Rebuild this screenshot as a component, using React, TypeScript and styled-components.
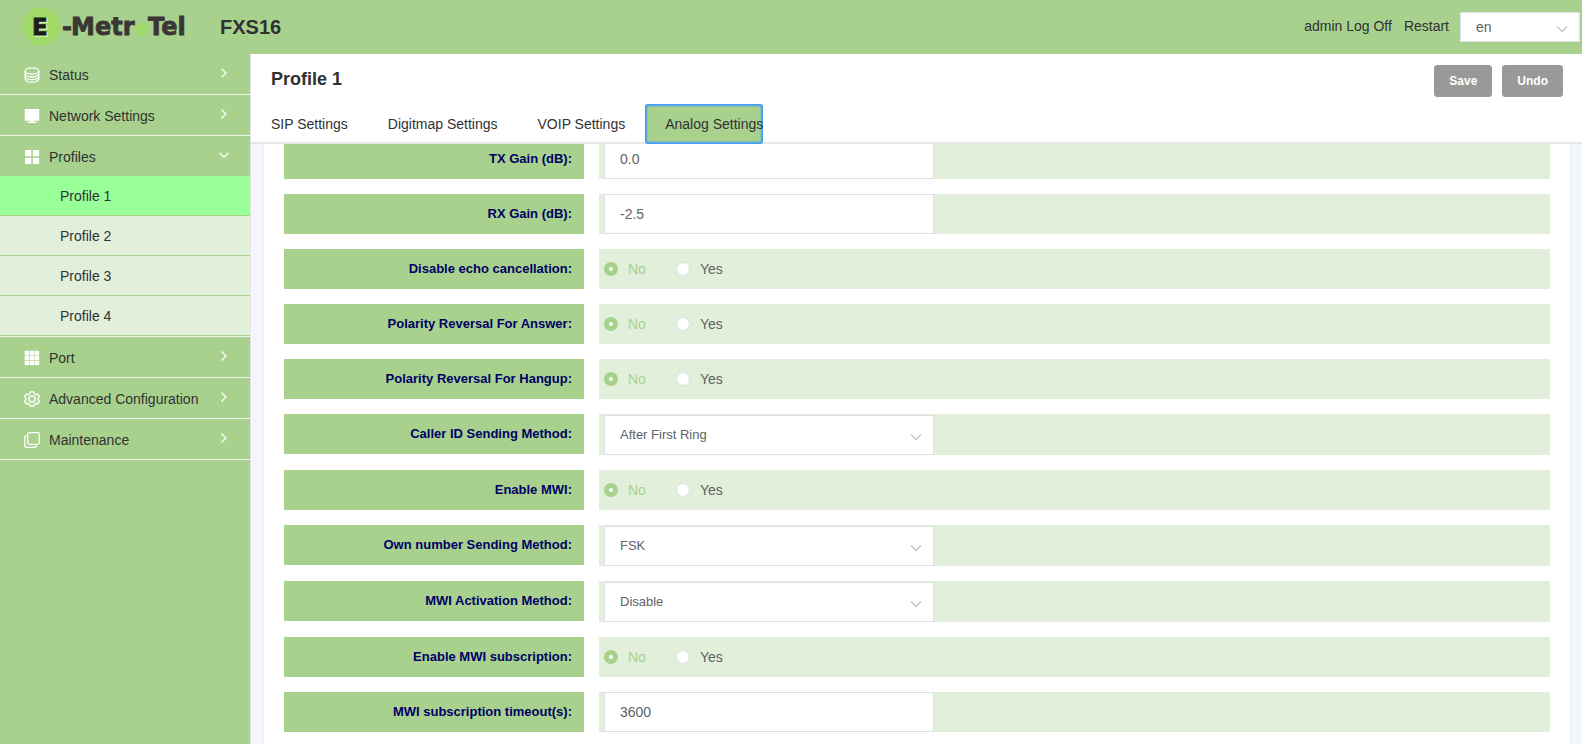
import React, { useState } from "react";
import styled, { createGlobalStyle, css } from "styled-components";

const green = "#a8d18d";
const paleGreen = "#e2efda";
const textDark = "#303133";
const textGrey = "#606266";
const borderGrey = "#dcdfe6";

const GlobalStyle = createGlobalStyle`
  *, *::before, *::after { box-sizing: border-box; }
  body {
    margin: 0;
    font-family: "Liberation Sans", Arial, Helvetica, sans-serif;
    font-size: 14px;
    color: ${textDark};
  }
  button, input, select { font: inherit; }
`;

const Page = styled.div`
  display: flex;
  flex-direction: column;
  height: 100vh;
  overflow: hidden;
`;

const Header = styled.header`
  display: flex;
  align-items: center;
  flex: none;
  height: 54px;
  padding: 0 2px 0 22px;
  background: ${green};
`;

const LogoSvg = styled.svg`
  display: block;
  flex: none;
`;

const Model = styled.h1`
  margin: 0 auto 0 27px;
  font-size: 20px;
  line-height: 54px;
  font-weight: bold;
`;

const HeaderLinks = styled.nav`
  display: flex;
  gap: 12px;
  margin-right: 11px;
  padding-bottom: 2px;
`;

const HeaderLink = styled.a`
  color: ${textDark};
  text-decoration: none;
`;

const Body = styled.div`
  display: flex;
  flex: 1;
  min-height: 0;
`;

const Sidebar = styled.nav`
  flex: none;
  width: 251px;
  background: ${green};
  border-right: 1px solid #e6e6e6;
`;

const MenuList = styled.ul`
  list-style: none;
  margin: 0;
  padding: 0;
`;

const MenuItem = styled.li`
  border-bottom: 1px solid #f0f5ec;
`;

const MenuButton = styled.button`
  display: flex;
  align-items: center;
  width: 100%;
  height: 40px;
  padding: 2px 20px 0 24px;
  border: 0;
  background: none;
  color: ${textDark};
  text-align: left;
  cursor: pointer;

  span {
    flex: 1;
    padding-left: 9px;
  }
`;

const MenuArrow = styled.svg`
  flex: none;
  margin-bottom: 4px;
`;

const SubLink = styled.a<{ $active: boolean }>`
  display: block;
  height: 40px;
  padding-left: 60px;
  line-height: 40px;
  border-bottom: 1px solid ${green};
  background: ${(p) => (p.$active ? "#99ff99" : paleGreen)};
  color: ${textDark};
  text-decoration: none;
`;

const Main = styled.main`
  display: flex;
  flex: 1;
  flex-direction: column;
  min-width: 0;
`;

const TitleBar = styled.div`
  display: flex;
  align-items: center;
  flex: none;
  height: 50px;
  padding: 4px 19px 0 20px;
  background: #fff;
`;

const Title = styled.h2`
  flex: 1;
  margin: 0;
  padding-bottom: 4px;
  font-size: 18px;
  font-weight: bold;
`;

const ActionButton = styled.button`
  height: 32px;
  margin-left: 10px;
  padding: 0 14px;
  border: 1px solid #999;
  border-radius: 3px;
  background: #999;
  color: #fff;
  font-size: 12px;
  font-weight: bold;
  cursor: pointer;
`;

const TabBar = styled.div`
  display: flex;
  flex: none;
  height: 40px;
  background: linear-gradient(to top, #e4e7ed 2px, #fff 2px);
`;

const Tab = styled.button<{ $active: boolean }>`
  padding: 0 20px;
  border: 0;
  background: none;
  color: ${textDark};
  line-height: 40px;
  white-space: nowrap;
  cursor: pointer;

  &:last-child { padding-right: 0; }

  ${(p) =>
    p.$active &&
    css`
      background: ${green};
      border-radius: 3px;
      box-shadow: inset 0 0 2px 2px #409eff;
    `}
`;

const ScrollArea = styled.div`
  flex: 1;
  min-height: 0;
  padding: 0 11px 0 12px;
  overflow-y: auto;
  scrollbar-width: none;
  background: #f3f6fa;
`;

const Panel = styled.form`
  display: flex;
  flex-direction: column;
  gap: 15px;
  min-height: 100%;
  margin-top: -5px;
  padding: 0 20px 20px;
  border: solid #ebeef5;
  border-width: 0 1px;
  background: #fff;
`;

const Row = styled.div`
  display: flex;
  align-items: flex-start;
  gap: 15px;
`;

const labelStyle = css`
  flex: none;
  width: 300px;
  height: 40px;
  padding-right: 12px;
  background: ${green};
  color: #000066;
  font-size: 13px;
  font-weight: bold;
  line-height: 39px;
  text-align: right;
`;

const RowLabel = styled.label`
  ${labelStyle}
`;

const GroupLabel = styled.span`
  ${labelStyle}
`;

const Value = styled.div<{ $select?: boolean }>`
  flex: 1;
  min-width: 0;
  padding: ${(p) => (p.$select ? "1px" : "0")} 5px 0;
  background: ${paleGreen};
`;

const TextInput = styled.input`
  display: block;
  width: 330px;
  height: 40px;
  padding: 0 15px;
  border: 1px solid ${borderGrey};
  border-radius: 0;
  background: #fff;
  color: ${textGrey};
  outline: none;
`;

const SelectBox = styled.div<{ $compact?: boolean }>`
  position: relative;
  width: ${(p) => (p.$compact ? "120px" : "330px")};
  height: ${(p) => (p.$compact ? "30px" : "40px")};
  font-size: ${(p) => (p.$compact ? "14px" : "13px")};
`;

const NativeSelect = styled.select<{ $compact?: boolean }>`
  display: block;
  width: 100%;
  height: 100%;
  padding: 0 30px ${(p) => (p.$compact ? "0" : "2px")} 15px;
  border: 1px solid ${borderGrey};
  border-radius: 0;
  background: #fff;
  color: ${textGrey};
  appearance: none;
  outline: none;
`;

const SelectArrow = styled.svg`
  position: absolute;
  right: 12px;
  bottom: 0;
  top: 4px;
  margin: auto 0;
  pointer-events: none;
`;

const RadioGroup = styled.div`
  display: flex;
  gap: 30px;
  height: 40px;
`;

const RadioLabel = styled.label<{ $checked: boolean }>`
  display: flex;
  align-items: center;
  gap: 10px;
  color: ${(p) => (p.$checked ? green : textGrey)};
  cursor: pointer;
`;

const RadioInput = styled.input`
  appearance: none;
  width: 14px;
  height: 14px;
  margin: 0;
  border: 1px solid ${borderGrey};
  border-radius: 50%;
  background: #fff;

  &:checked {
    border: 5px solid ${green};
  }
`;

const Logo = () => (
  <LogoSvg width="171" height="54" viewBox="22 0 171 54" role="img" aria-label="E-MetroTel">
    <circle cx="41.5" cy="26.5" r="19" fill="#a0d966" />
    <g fontFamily="'DejaVu Sans', sans-serif" fontWeight="bold">
      <text x="33" y="35.5" fontSize="23" fill="#d5efb8" stroke="#d5efb8" strokeWidth="1.600">E</text>
      <text x="32" y="34.500" fontSize="23" fill="#1d1d1b" stroke="#1d1d1b" strokeWidth="0.8">E</text>
      <g fontSize="24" fill="#3a3634" stroke="#3a3634" strokeWidth="0.8">
        <text x="62" y="35">-</text>
        <text x="71" y="35">Metr</text>
        <text x="148" y="35">Tel</text>
      </g>
    </g>
    <circle cx="141.5" cy="29" r="6" fill="#a0d966" />
  </LogoSvg>
);

const icons: Record<string, React.ReactNode> = {
  coin: (
    <g fill="none" stroke="#fff" strokeWidth="1.3">
      <ellipse cx="8" cy="4" rx="6.8" ry="3.2" />
      <path d="M1.2 4v8c0 1.8 3 3.2 6.8 3.2s6.8-1.4 6.8-3.2V4" />
      <path d="M1.2 6.8C1.2 8.600 4.200 10 8 10s6.800-1.400 6.800-3.200" />
      <path d="M1.200 9.500c0 1.800 3 3.200 6.800 3.200s6.800-1.400 6.800-3.200" />
    </g>
  ),
  platform: (
    <g fill="#fff">
      <path d="M1.500 1h13a.8.8 0 0 1 .8.8V12a.8.8 0 0 1-.8.8h-13A.8.8 0 0 1 .7 12V1.800A.8.8 0 0 1 1.500 1z" />
      <path d="M6.500 12.500h3v1.200h3.200V15H3.300v-1.300h3.200z" />
    </g>
  ),
  menu: (
    <g fill="#fff">
      <rect x="1" y="1" width="6.300" height="6.300" rx=".4" />
      <rect x="8.800" y="1" width="6.300" height="6.300" rx=".4" />
      <rect x="1" y="8.800" width="6.300" height="6.300" rx=".4" />
      <rect x="8.800" y="8.800" width="6.300" height="6.300" rx=".4" />
    </g>
  ),
  grid: (
    <g fill="#fff">
      {[0.7, 5.7, 10.7].map((y) =>
        [0.7, 5.7, 10.7].map((x) => <rect key={`${x}-${y}`} x={x} y={y} width="4.500" height="4.500" />)
      )}
    </g>
  ),
  setting: (
    <g fill="none" stroke="#fff" strokeWidth="1.400" strokeLinejoin="round">
      <path d="M6.200.900h3.600l.6 1.900 1.500.9 2-.4 1.500 2.600-1.300 1.500v1.200l1.300 1.500-1.500 2.600-2-.4-1.500.9-.6 1.900H6.200l-.6-1.900-1.500-.9-2 .4L.600 10.100l1.300-1.500V7.400L.600 5.900l1.500-2.600 2 .4 1.500-.9z" />
      <circle cx="8" cy="8" r="3" />
    </g>
  ),
  copy: (
    <g fill="none" stroke="#fff" strokeWidth="1.300">
      <rect x="3.700" y=".700" width="11.600" height="11.600" rx="1.500" />
      <path d="M3.700 3.700H2.500A1.800 1.800 0 0 0 .7 5.500v8a1.800 1.800 0 0 0 1.800 1.800h8a1.800 1.800 0 0 0 1.800-1.800v-1.200" />
    </g>
  ),
};

const menu = [
  { icon: "coin", label: "Status" },
  { icon: "platform", label: "Network Settings" },
  { icon: "menu", label: "Profiles", children: ["Profile 1", "Profile 2", "Profile 3", "Profile 4"] },
  { icon: "grid", label: "Port" },
  { icon: "setting", label: "Advanced Configuration" },
  { icon: "copy", label: "Maintenance" },
];

const tabs = ["SIP Settings", "Digitmap Settings", "VOIP Settings", "Analog Settings"];

type Field = { id: string; label: string; kind: "text" | "radio" | "select"; value: string };

const fields: Field[] = [
  { id: "tx", label: "TX Gain (dB):", kind: "text", value: "0.0" },
  { id: "rx", label: "RX Gain (dB):", kind: "text", value: "-2.5" },
  { id: "echo", label: "Disable echo cancellation:", kind: "radio", value: "No" },
  { id: "answer", label: "Polarity Reversal For Answer:", kind: "radio", value: "No" },
  { id: "hangup", label: "Polarity Reversal For Hangup:", kind: "radio", value: "No" },
  { id: "callerId", label: "Caller ID Sending Method:", kind: "select", value: "After First Ring" },
  { id: "mwi", label: "Enable MWI:", kind: "radio", value: "No" },
  { id: "ownNumber", label: "Own number Sending Method:", kind: "select", value: "FSK" },
  { id: "mwiMethod", label: "MWI Activation Method:", kind: "select", value: "Disable" },
  { id: "mwiSub", label: "Enable MWI subscription:", kind: "radio", value: "No" },
  { id: "mwiTimeout", label: "MWI subscription timeout(s):", kind: "text", value: "3600" },
];

const Select = ({ id, value, label, compact }: { id: string; value: string; label?: string; compact?: boolean }) => (
  <SelectBox $compact={compact}>
    <NativeSelect id={id} aria-label={label} defaultValue={value} $compact={compact}>
      <option>{value}</option>
    </NativeSelect>
    <SelectArrow width="12" height="8" viewBox="0 0 12 8" fill="none" stroke="#c0c4cc" strokeWidth="1.300">
      <path d="M1 1.500l5 5 5-5" />
    </SelectArrow>
  </SelectBox>
);

const YesNo = ({ id, initial }: { id: string; initial: string }) => {
  const [value, setValue] = useState(initial);
  return (
    <RadioGroup role="radiogroup" aria-labelledby={`${id}-label`}>
      {["No", "Yes"].map((option) => (
        <RadioLabel key={option} $checked={value === option}>
          <RadioInput type="radio" name={id} checked={value === option} onChange={() => setValue(option)} />
          {option}
        </RadioLabel>
      ))}
    </RadioGroup>
  );
};

const FieldRow = ({ field }: { field: Field }) => (
  <Row>
    {field.kind === "radio" ? (
      <GroupLabel id={`${field.id}-label`}>{field.label}</GroupLabel>
    ) : (
      <RowLabel htmlFor={field.id}>{field.label}</RowLabel>
    )}
    <Value $select={field.kind === "select"}>
      {field.kind === "text" && <TextInput id={field.id} type="text" defaultValue={field.value} />}
      {field.kind === "select" && <Select id={field.id} value={field.value} />}
      {field.kind === "radio" && <YesNo id={field.id} initial={field.value} />}
    </Value>
  </Row>
);

export default function App() {
  const [profile, setProfile] = useState("Profile 1");
  const [tab, setTab] = useState("Analog Settings");
  const [open, setOpen] = useState("Profiles");

  return (
    <Page>
      <GlobalStyle />
      <Header>
        <Logo />
        <Model>FXS16</Model>
        <HeaderLinks>
          <HeaderLink href="#logoff">admin Log Off</HeaderLink>
          <HeaderLink href="#restart">Restart</HeaderLink>
        </HeaderLinks>
        <Select id="language" value="en" label="Language" compact />
      </Header>
      <Body>
        <Sidebar>
          <MenuList>
            {menu.map((item) => {
              const isOpen = !!item.children && open === item.label;
              return (
                <MenuItem key={item.label}>
                  <MenuButton
                    type="button"
                    aria-expanded={isOpen}
                    onClick={() => setOpen(isOpen ? "" : item.label)}
                  >
                    <svg width="16" height="16" viewBox="0 0 16 16">{icons[item.icon]}</svg>
                    <span>{item.label}</span>
                    <MenuArrow width="12" height="12" viewBox="0 0 12 12" fill="none" stroke="#fff" strokeWidth="1.300">
                      <path d={isOpen ? "M1.500 3.700L6 8.200l4.500-4.500" : "M3.500 1.500L8 6l-4.500 4.500"} />
                    </MenuArrow>
                  </MenuButton>
                  {isOpen &&
                    item.children!.map((child) => (
                      <SubLink
                        key={child}
                        href="#profile"
                        $active={child === profile}
                        onClick={() => setProfile(child)}
                      >
                        {child}
                      </SubLink>
                    ))}
                </MenuItem>
              );
            })}
          </MenuList>
        </Sidebar>
        <Main>
          <TitleBar>
            <Title>{profile}</Title>
            <ActionButton type="button">Save</ActionButton>
            <ActionButton type="button">Undo</ActionButton>
          </TitleBar>
          <TabBar role="tablist">
            {tabs.map((name) => (
              <Tab
                key={name}
                type="button"
                role="tab"
                aria-selected={name === tab}
                $active={name === tab}
                onClick={() => setTab(name)}
              >
                {name}
              </Tab>
            ))}
          </TabBar>
          <ScrollArea>
            <Panel>
              {fields.map((field) => (
                <FieldRow key={field.id} field={field} />
              ))}
            </Panel>
          </ScrollArea>
        </Main>
      </Body>
    </Page>
  );
}
